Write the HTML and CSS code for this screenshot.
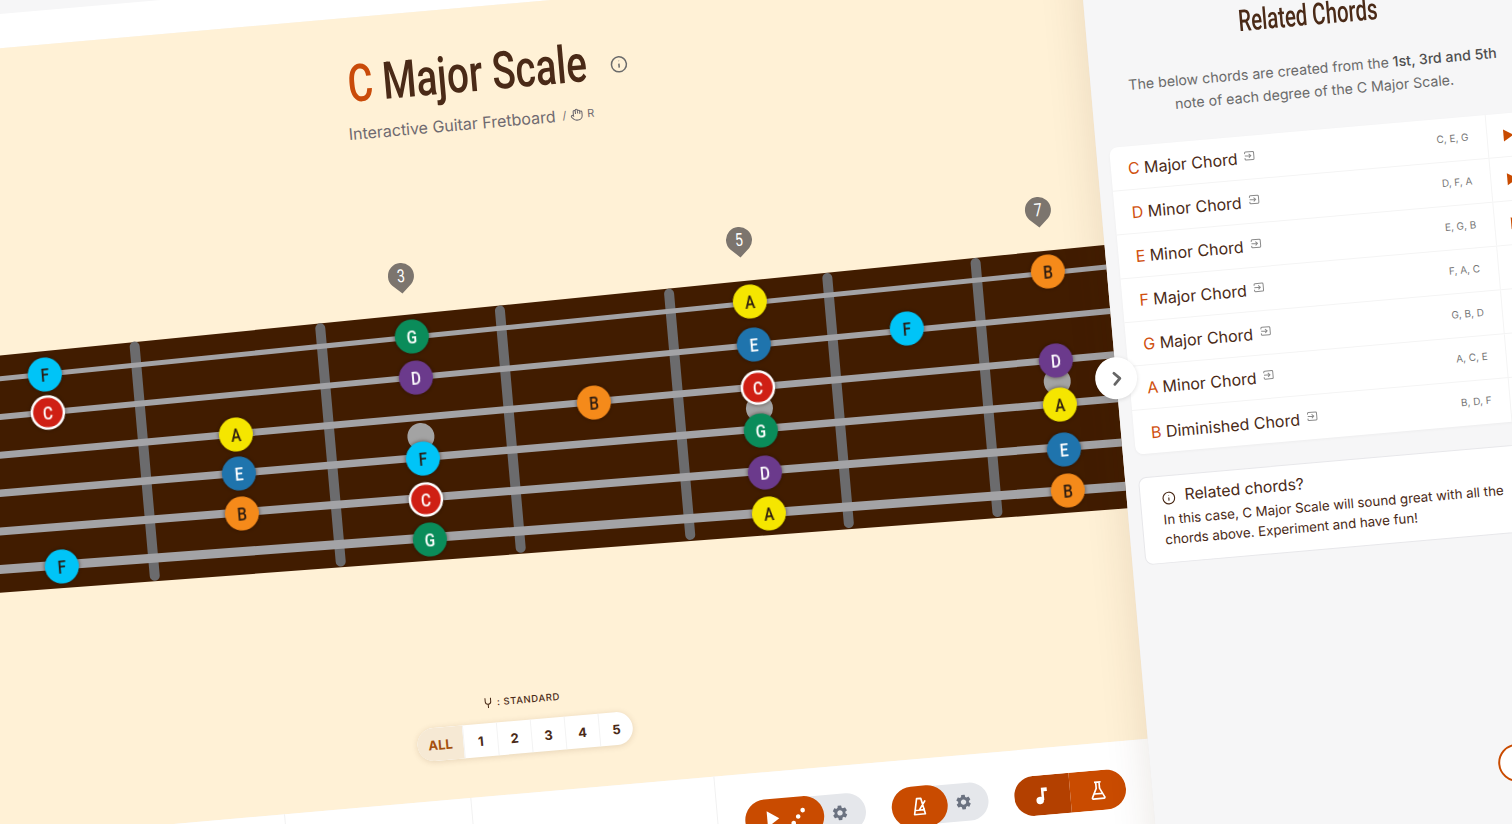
FILE: index.html
```html
<!DOCTYPE html>
<html lang="en">
<head>
    <meta charset="UTF-8">
    <meta name="viewport" content="width=device-width, initial-scale=1.0">
    <title>C Major Scale - Interactive Guitar Fretboard</title>
    <link rel="stylesheet" href="styles.css">
</head>
<body>
    <svg class="sprite" aria-hidden="true">
        <symbol id="i-gear" viewBox="0 0 24 24"><path fill="currentColor" d="M19.14 12.94c.04-.3.06-.61.06-.94 0-.32-.02-.64-.07-.94l2.03-1.58a.49.49 0 0 0 .12-.61l-1.92-3.32a.488.488 0 0 0-.59-.22l-2.39.96c-.5-.38-1.03-.7-1.62-.94l-.36-2.54a.484.484 0 0 0-.48-.41h-3.84c-.24 0-.43.17-.47.41l-.36 2.54c-.59.24-1.13.57-1.62.94l-2.39-.96c-.22-.08-.47 0-.59.22L2.74 8.87c-.12.21-.08.47.12.61l2.03 1.58c-.05.3-.09.63-.09.94s.02.64.07.94l-2.03 1.58a.49.49 0 0 0-.12.61l1.92 3.32c.12.22.37.29.59.22l2.39-.96c.5.38 1.03.7 1.62.94l.36 2.54c.05.24.24.41.48.41h3.84c.24 0 .44-.17.47-.41l.36-2.54c.59-.24 1.13-.56 1.62-.94l2.39.96c.22.08.47 0 .59-.22l1.92-3.32c.12-.22.07-.47-.12-.61l-2.01-1.58zM12 15.6c-1.98 0-3.6-1.62-3.6-3.6s1.62-3.6 3.6-3.6 3.6 1.62 3.6 3.6-1.62 3.6-3.6 3.6z"/></symbol>
        <symbol id="i-open" viewBox="0 0 24 24"><path fill="none" stroke="currentColor" stroke-width="2" d="M3 8V6a2 2 0 0 1 2-2h14a2 2 0 0 1 2 2v12a2 2 0 0 1-2 2H5a2 2 0 0 1-2-2v-2M3 12h11M11 8l4 4-4 4"/></symbol>
        <symbol id="i-info" viewBox="0 0 24 24"><g fill="none" stroke="currentColor" stroke-width="2"><circle cx="12" cy="12" r="10"/><path d="M12 16.5V11M12 7.2v.6"/></g></symbol>
    </svg>

    <div class="stage">
        <main class="main">
            <div class="topbar"></div>
            <section class="board-area">
                <div class="title-wrap">
                    <h1 class="title"><span class="root">C</span> Major Scale</h1>
                    <svg class="title-info"><use href="#i-info"/></svg>
                </div>
                <p class="subtitle">
                    Interactive Guitar Fretboard
                    <span class="subtitle-root">/
                        <svg class="hand" viewBox="0 0 24 24"><path fill="none" stroke="currentColor" stroke-width="2" d="M18 11V6a2 2 0 0 0-4 0M14 10V4a2 2 0 0 0-4 0v2M10 10.5V6a2 2 0 0 0-4 0v8M18 8a2 2 0 1 1 4 0v6a8 8 0 0 1-8 8h-2c-2.8 0-4.5-.86-6-2.34l-3.6-3.6a2 2 0 0 1 2.83-2.82L7 15"/></svg>
                        R</span>
                </p>

                <svg class="fretboard" viewBox="0 -60 1240 340">
                    <polygon class="wood" points="0,23.8 1240,8.3 1240,272.7 0,257.2"/>

                    <g class="frets">
                        <line x1="265" y1="25" x2="265" y2="255"/>
                        <line x1="451.5" y1="23" x2="451.5" y2="257"/>
                        <line x1="632" y1="21" x2="632" y2="259"/>
                        <line x1="802" y1="19" x2="802" y2="261"/>
                        <line x1="961" y1="17" x2="961" y2="263"/>
                        <line x1="1110" y1="15" x2="1110" y2="265"/>
                    </g>

                    <g class="strings">
                        <line class="s1" x1="0" y1="47" x2="1240" y2="30.5"/>
                        <line class="s2" x1="0" y1="84.4" x2="1240" y2="74.5"/>
                        <line class="s3" x1="0" y1="121.8" x2="1240" y2="118.5"/>
                        <line class="s4" x1="0" y1="159.1" x2="1240" y2="162.5"/>
                        <line class="s5" x1="0" y1="196.5" x2="1240" y2="206.5"/>
                        <line class="s6" x1="0" y1="233.9" x2="1240" y2="250.5"/>
                    </g>

                    <g class="inlays">
                        <circle cx="542.3" cy="139.5" r="13.5"/>
                        <circle cx="882" cy="141" r="13.5"/>
                        <circle cx="1181" cy="140" r="13.5"/>
                    </g>

                    <!-- fret position pins -->
                    <g class="pin" transform="translate(536.4,-22)"><path d="M0 17.5L-9.5 8.8A13 13 0 1 1 9.5 8.8Z"/><text y="6">3</text></g>
                    <g class="pin" transform="translate(876.3,-28.5)"><path d="M0 17.5L-9.5 8.8A13 13 0 1 1 9.5 8.8Z"/><text y="6">5</text></g>
                    <g class="pin" transform="translate(1176.7,-32.3)"><path d="M0 17.5L-9.5 8.8A13 13 0 1 1 9.5 8.8Z"/><text y="6">7</text></g>

                    <g class="note note-f" transform="translate(173.1,45)"><circle r="17"/><text y="6.8">F</text></g>
                    <g class="note note-c" transform="translate(172.8,83.1)"><circle r="16"/><text y="6.8">C</text></g>
                    <g class="note note-f" transform="translate(173.3,237.7)"><circle r="17"/><text y="6.8">F</text></g>

                    <g class="note note-a" transform="translate(358.2,121.4)"><circle r="17"/><text y="6.8">A</text></g>
                    <g class="note note-e" transform="translate(357.8,160.5)"><circle r="17"/><text y="6.8">E</text></g>
                    <g class="note note-b" transform="translate(357.3,200.6)"><circle r="17"/><text y="6.8">B</text></g>

                    <g class="note note-g" transform="translate(542,39.1)"><circle r="17"/><text y="6.8">G</text></g>
                    <g class="note note-d" transform="translate(542.5,80.4)"><circle r="17"/><text y="6.8">D</text></g>
                    <g class="note note-f" transform="translate(542.4,161.7)"><circle r="17"/><text y="6.8">F</text></g>
                    <g class="note note-c" transform="translate(541.8,202.7)"><circle r="16"/><text y="6.8">C</text></g>
                    <g class="note note-g" transform="translate(542.3,242.9)"><circle r="17"/><text y="6.8">G</text></g>

                    <g class="note note-b" transform="translate(717.6,120.8)"><circle r="17"/><text y="6.8">B</text></g>

                    <g class="note note-a" transform="translate(881.8,33.7)"><circle r="17"/><text y="6.8">A</text></g>
                    <g class="note note-e" transform="translate(882,76.9)"><circle r="17"/><text y="6.8">E</text></g>
                    <g class="note note-c" transform="translate(882.3,120.1)"><circle r="16"/><text y="6.8">C</text></g>
                    <g class="note note-g" transform="translate(881.5,163.2)"><circle r="17"/><text y="6.8">G</text></g>
                    <g class="note note-d" transform="translate(881.9,205.4)"><circle r="17"/><text y="6.8">D</text></g>
                    <g class="note note-a" transform="translate(882.3,246.5)"><circle r="17"/><text y="6.8">A</text></g>

                    <g class="note note-f" transform="translate(1035.8,74.3)"><circle r="17"/><text y="6.8">F</text></g>

                    <g class="note note-b" transform="translate(1181.3,29.8)"><circle r="17"/><text y="6.8">B</text></g>
                    <g class="note note-d" transform="translate(1181.5,119.1)"><circle r="17"/><text y="6.8">D</text></g>
                    <g class="note note-a" transform="translate(1181.7,163.4)"><circle r="17"/><text y="6.8">A</text></g>
                    <g class="note note-e" transform="translate(1181.8,208.5)"><circle r="17"/><text y="6.8">E</text></g>
                    <g class="note note-b" transform="translate(1182.1,249.7)"><circle r="17"/><text y="6.8">B</text></g>
                </svg>

                <p class="tuning">
                    <svg class="fork" viewBox="0 0 10 14"><path fill="none" stroke="currentColor" stroke-width="1.3" d="M1.5 1v4.5a3.5 3.5 0 0 0 7 0V1M5 9v5"/></svg>
                    <span>: STANDARD</span>
                </p>
                <div class="positions">
                    <button class="pos pos-all">ALL</button>
                    <button class="pos">1</button>
                    <button class="pos">2</button>
                    <button class="pos">3</button>
                    <button class="pos">4</button>
                    <button class="pos">5</button>
                </div>
            </section>

            <footer class="toolbar">
                <div class="cell cell-a"></div>
                <div class="cell cell-b"></div>
                <div class="cell cell-c"></div>
                <div class="controls">
                    <div class="ctl ctl-play">
                        <span class="ctl-main">
                            <svg class="play-run" viewBox="0 0 44 20"><path d="M4 2L16 10L4 18Z"/><circle cx="40" cy="4" r="2.3"/><circle cx="35" cy="10" r="2.3"/><circle cx="30" cy="16" r="2.3"/></svg>
                        </span>
                        <svg class="gear"><use href="#i-gear"/></svg>
                    </div>
                    <div class="ctl ctl-metro">
                        <span class="ctl-main">
                            <svg class="tool-icon" viewBox="0 0 24 24"><path fill="none" stroke="currentColor" stroke-width="2" stroke-linejoin="round" d="M5 22L9 3h5l4 19ZM6 17h12M11 17l8-11"/></svg>
                        </span>
                        <svg class="gear"><use href="#i-gear"/></svg>
                    </div>
                    <div class="ctl-split">
                        <span class="split-left">
                            <svg class="tool-icon" viewBox="0 0 24 24"><circle cx="9" cy="18" r="4.5" fill="currentColor"/><path fill="currentColor" d="M11 18V3h7v4.5h-4V18Z"/></svg>
                        </span>
                        <span class="split-right">
                            <svg class="tool-icon" viewBox="0 0 24 24"><path fill="none" stroke="currentColor" stroke-width="2" stroke-linejoin="round" d="M10 2v7.5L4.6 20.5a1 1 0 0 0 .9 1.5h13a1 1 0 0 0 .9-1.5L14 9.5V2M8 2h8M7.5 16h9"/></svg>
                        </span>
                    </div>
                </div>
            </footer>
        </main>

        <aside class="panel">
            <button class="collapse">
                <svg viewBox="0 0 24 24"><path fill="none" stroke="currentColor" stroke-width="3.5" stroke-linecap="round" stroke-linejoin="round" d="M9 5l7 7-7 7"/></svg>
            </button>

            <h2 class="panel-title">Related Chords</h2>
            <p class="panel-text">The below chords are created from the <b>1st, 3rd and 5th</b><br>note of each degree of the C Major Scale.</p>

            <ul class="chords">
                <li class="chord"><span class="chord-name"><em>C</em> Major Chord <svg class="open"><use href="#i-open"/></svg></span><span class="chord-notes">C, E, G</span><span class="chord-play"></span></li>
                <li class="chord"><span class="chord-name"><em>D</em> Minor Chord <svg class="open"><use href="#i-open"/></svg></span><span class="chord-notes">D, F, A</span><span class="chord-play"></span></li>
                <li class="chord"><span class="chord-name"><em>E</em> Minor Chord <svg class="open"><use href="#i-open"/></svg></span><span class="chord-notes">E, G, B</span><span class="chord-play"></span></li>
                <li class="chord"><span class="chord-name"><em>F</em> Major Chord <svg class="open"><use href="#i-open"/></svg></span><span class="chord-notes">F, A, C</span><span class="chord-play"></span></li>
                <li class="chord"><span class="chord-name"><em>G</em> Major Chord <svg class="open"><use href="#i-open"/></svg></span><span class="chord-notes">G, B, D</span><span class="chord-play"></span></li>
                <li class="chord"><span class="chord-name"><em>A</em> Minor Chord <svg class="open"><use href="#i-open"/></svg></span><span class="chord-notes">A, C, E</span><span class="chord-play"></span></li>
                <li class="chord"><span class="chord-name"><em>B</em> Diminished Chord <svg class="open"><use href="#i-open"/></svg></span><span class="chord-notes">B, D, F</span><span class="chord-play"></span></li>
            </ul>

            <div class="callout">
                <h3 class="callout-title"><svg class="callout-icon"><use href="#i-info"/></svg> Related chords?</h3>
                <p class="callout-text">In this case, C Major Scale will sound great with all the chords above. Experiment and have fun!</p>
            </div>

            <span class="float-btn"></span>
        </aside>
    </div>
</body>
</html>
```

FILE: styles.css
```css
html,
body {
    margin: 0;
    height: 100%;
    overflow: hidden;
    background-color: #f6f6f7;
}

body {
    font-family: "Inter", "Noto Sans", sans-serif;
    color: #4a2a17;
}

.sprite {
    display: none;
}

/* whole page is tilted 5deg, everything inside is normal flow */
.stage {
    display: flex;
    width: 1700px;
    height: 1040px;
    background-color: #f6f6f7;
    transform-origin: 0 0;
    transform: translate(-163.9px, -25.8px) rotate(-5deg);
}

.main {
    display: flex;
    flex-direction: column;
    width: 1240px;
    flex: none;
}

.topbar {
    height: 34px;
    margin-top: 54px;
    background-color: #fff;
}

.board-area {
    display: flex;
    flex-direction: column;
    align-items: center;
    flex: 1;
    padding-top: 37px;
    background-color: #fff1d6;
}

.title-wrap {
    position: relative;
    height: 60px;
}

.title {
    margin: 0;
    font-family: "Roboto", sans-serif;
    font-size: 52px;
    font-weight: 500;
    line-height: 60px;
    white-space: nowrap;
    transform: scaleX(.745);
}

.root {
    color: #c94b0a;
}

.title-info {
    position: absolute;
    left: calc(50% + 143px);
    top: 24px;
    width: 18px;
    height: 18px;
    color: #6b6b6b;
}

.subtitle {
    display: flex;
    align-items: center;
    gap: 7px;
    margin: 7px 0 0;
    font-size: 16px;
    line-height: 24px;
    color: #6f6a70;
}

.subtitle-root {
    display: flex;
    align-items: center;
    gap: 4px;
    font-size: 11px;
}

.hand {
    width: 13px;
    height: 13px;
}

.fretboard {
    display: block;
    flex: none;
    width: 1240px;
    height: 340px;
    margin-top: 96px;
    overflow: visible;
}

.wood {
    fill: #411c00;
}

.frets line {
    stroke: #6b6b6d;
    stroke-width: 10;
    stroke-linecap: round;
}

.strings line {
    stroke: #a3a3a6;
}

.strings .s1 { stroke-width: 5; }
.strings .s2 { stroke-width: 6; }
.strings .s3 { stroke-width: 7; }
.strings .s4 { stroke-width: 7.5; }
.strings .s5 { stroke-width: 8; }
.strings .s6 { stroke-width: 9; }

.inlays circle {
    fill: #a3a3a3;
}

.pin path {
    fill: #7c756e;
}

.pin text {
    font-family: "Roboto", sans-serif;
    font-size: 18px;
    fill: #fff;
    text-anchor: middle;
    transform: scaleX(.78);
}

.note {
    filter: drop-shadow(0 0 2px rgba(30, 10, 0, .6));
}

.note text {
    font-family: "Roboto", sans-serif;
    font-size: 19px;
    font-weight: 500;
    text-anchor: middle;
    fill: #fff;
    transform: scaleX(.8);
}

.note-f circle { fill: #00c4f7; }
.note-e circle { fill: #1f74ad; }
.note-b circle { fill: #f58a1a; }
.note-a circle { fill: #f5e600; }
.note-g circle { fill: #0a8c5a; }
.note-d circle { fill: #6b3a8c; }
.note-c circle {
    fill: #cf1f14;
    stroke: #fff;
    stroke-width: 2.5;
}

.note-f text,
.note-b text,
.note-a text {
    fill: #2a1a10;
}

.tuning {
    display: flex;
    align-items: center;
    gap: 5px;
    height: 14px;
    margin: 123.5px 0 0;
    font-size: 9.5px;
    font-weight: 500;
    letter-spacing: .6px;
}

.fork {
    width: 8px;
    height: 11px;
}

.positions {
    display: flex;
    margin-top: 13.5px;
    border-radius: 17px;
    overflow: hidden;
    background-color: #fff;
    box-shadow: 0 1px 6px rgba(90, 50, 10, .15);
}

.pos {
    width: 34px;
    height: 33px;
    padding: 0;
    border: 0;
    border-left: 1px solid #f3f3f3;
    background: none;
    font-family: inherit;
    font-size: 13px;
    font-weight: 700;
    color: #4a2a17;
}

.pos-all {
    width: 46px;
    border-left: 0;
    background-color: #f6e9d4;
    color: #a4500f;
}

.toolbar {
    display: flex;
    flex: none;
    height: 164px;
    background-color: #fff;
}

.cell {
    border-right: 1px solid #f1f1f1;
}

.cell-a { width: 373px; }
.cell-b { width: 186px; }
.cell-c { width: 243px; }

.controls {
    display: flex;
    flex: 1;
    justify-content: flex-end;
    align-items: flex-start;
    gap: 26px;
    padding: 28px 26px 0 0;
}

.ctl {
    display: flex;
    align-items: center;
    height: 38px;
    border-radius: 19px;
    background-color: #e5e7eb;
}

.ctl-main {
    display: flex;
    align-items: center;
    justify-content: center;
    height: 41px;
    border-radius: 21px;
    background-color: #c94b00;
    color: #fff;
}

.ctl-play { width: 121px; }
.ctl-play .ctl-main { width: 79px; }
.ctl-metro { width: 97px; }
.ctl-metro .ctl-main { width: 56px; }

.play-run {
    width: 44px;
    height: 20px;
    fill: #fff;
}

.gear {
    width: 18px;
    height: 18px;
    margin-left: 7px;
    color: #6b7280;
}

.tool-icon {
    width: 20px;
    height: 20px;
}

.ctl-split {
    display: flex;
    width: 112px;
    height: 40px;
    margin-top: -1px;
    border-radius: 20px;
    overflow: hidden;
    color: #fff;
}

.split-left,
.split-right {
    display: flex;
    flex: 1;
    align-items: center;
    justify-content: center;
}

.split-left { background-color: #b34000; }
.split-right { background-color: #c94b00; }

.panel {
    position: relative;
    flex: none;
    width: 446px;
    padding: 149px 14px 0 13px;
    box-sizing: border-box;
    background-color: #f6f6f7;
    box-shadow: 0 0 45px rgba(70, 40, 0, .12);
    text-align: center;
}

.collapse {
    position: absolute;
    left: -21px;
    top: 493px;
    width: 42px;
    height: 42px;
    padding: 0;
    border: 0;
    border-radius: 50%;
    background-color: #fff;
    color: #666;
    box-shadow: 0 1px 4px rgba(0, 0, 0, .12);
}

.collapse svg {
    display: block;
    width: 19px;
    height: 19px;
    margin: auto;
}

.panel-title {
    margin: 0;
    font-family: "Roboto", sans-serif;
    font-size: 30px;
    font-weight: 500;
    line-height: 40px;
    transform: scaleX(.68);
}

.panel-text {
    margin: 22px 0 0;
    font-size: 14.2px;
    line-height: 23px;
    color: #6b6b6b;
    white-space: nowrap;
}

.panel-text b {
    font-weight: 500;
    color: #4f4f4f;
}

.chords {
    margin: 27px 0 0;
    padding: 0;
    list-style: none;
    border-radius: 8px;
    background-color: #fff;
    box-shadow: 0 1px 3px rgba(0, 0, 0, .04);
    text-align: left;
}

.chord {
    display: grid;
    grid-template-columns: 1fr auto 42px;
    align-items: stretch;
    height: 44px;
    box-sizing: border-box;
    border-bottom: 1px solid #f4f4f4;
}

.chord:last-child {
    border-bottom: 0;
}

.chord-name {
    align-self: center;
    padding-left: 17px;
    padding-top: 1px;
    font-size: 16px;
}

.chord-name em {
    font-style: normal;
    color: #d0500f;
}

.open {
    width: 12px;
    height: 12px;
    margin-left: 2px;
    vertical-align: 2px;
    color: #8a8a8a;
}

.chord-notes {
    padding: 14px 18px 0 0;
    font-size: 10px;
    color: #777;
}

.chord-play {
    position: relative;
    border-left: 1px solid #f4f4f4;
}

.chord-play::after {
    content: "";
    position: absolute;
    left: 16px;
    top: 16px;
    border-left: 10px solid #c94b00;
    border-top: 6px solid transparent;
    border-bottom: 6px solid transparent;
}

.callout {
    height: 88px;
    margin-top: 23px;
    padding: 10px 30px 0 21px;
    box-sizing: border-box;
    border: 1px solid #e7e7ea;
    border-radius: 8px;
    background-color: #fff;
    text-align: left;
}

.callout-title {
    display: flex;
    align-items: center;
    gap: 9px;
    margin: 0;
    font-size: 15.8px;
    font-weight: 400;
    line-height: 20px;
}

.callout-icon {
    width: 14px;
    height: 14px;
    margin-top: 3px;
}

.callout-text {
    margin: 4px 0 0;
    font-size: 13.3px;
    line-height: 19.5px;
}

.float-btn {
    position: absolute;
    left: 347px;
    top: 913px;
    width: 38px;
    height: 38px;
    box-sizing: border-box;
    border: 2px solid #c94b00;
    border-radius: 50%;
    background-color: #fff;
}
```
